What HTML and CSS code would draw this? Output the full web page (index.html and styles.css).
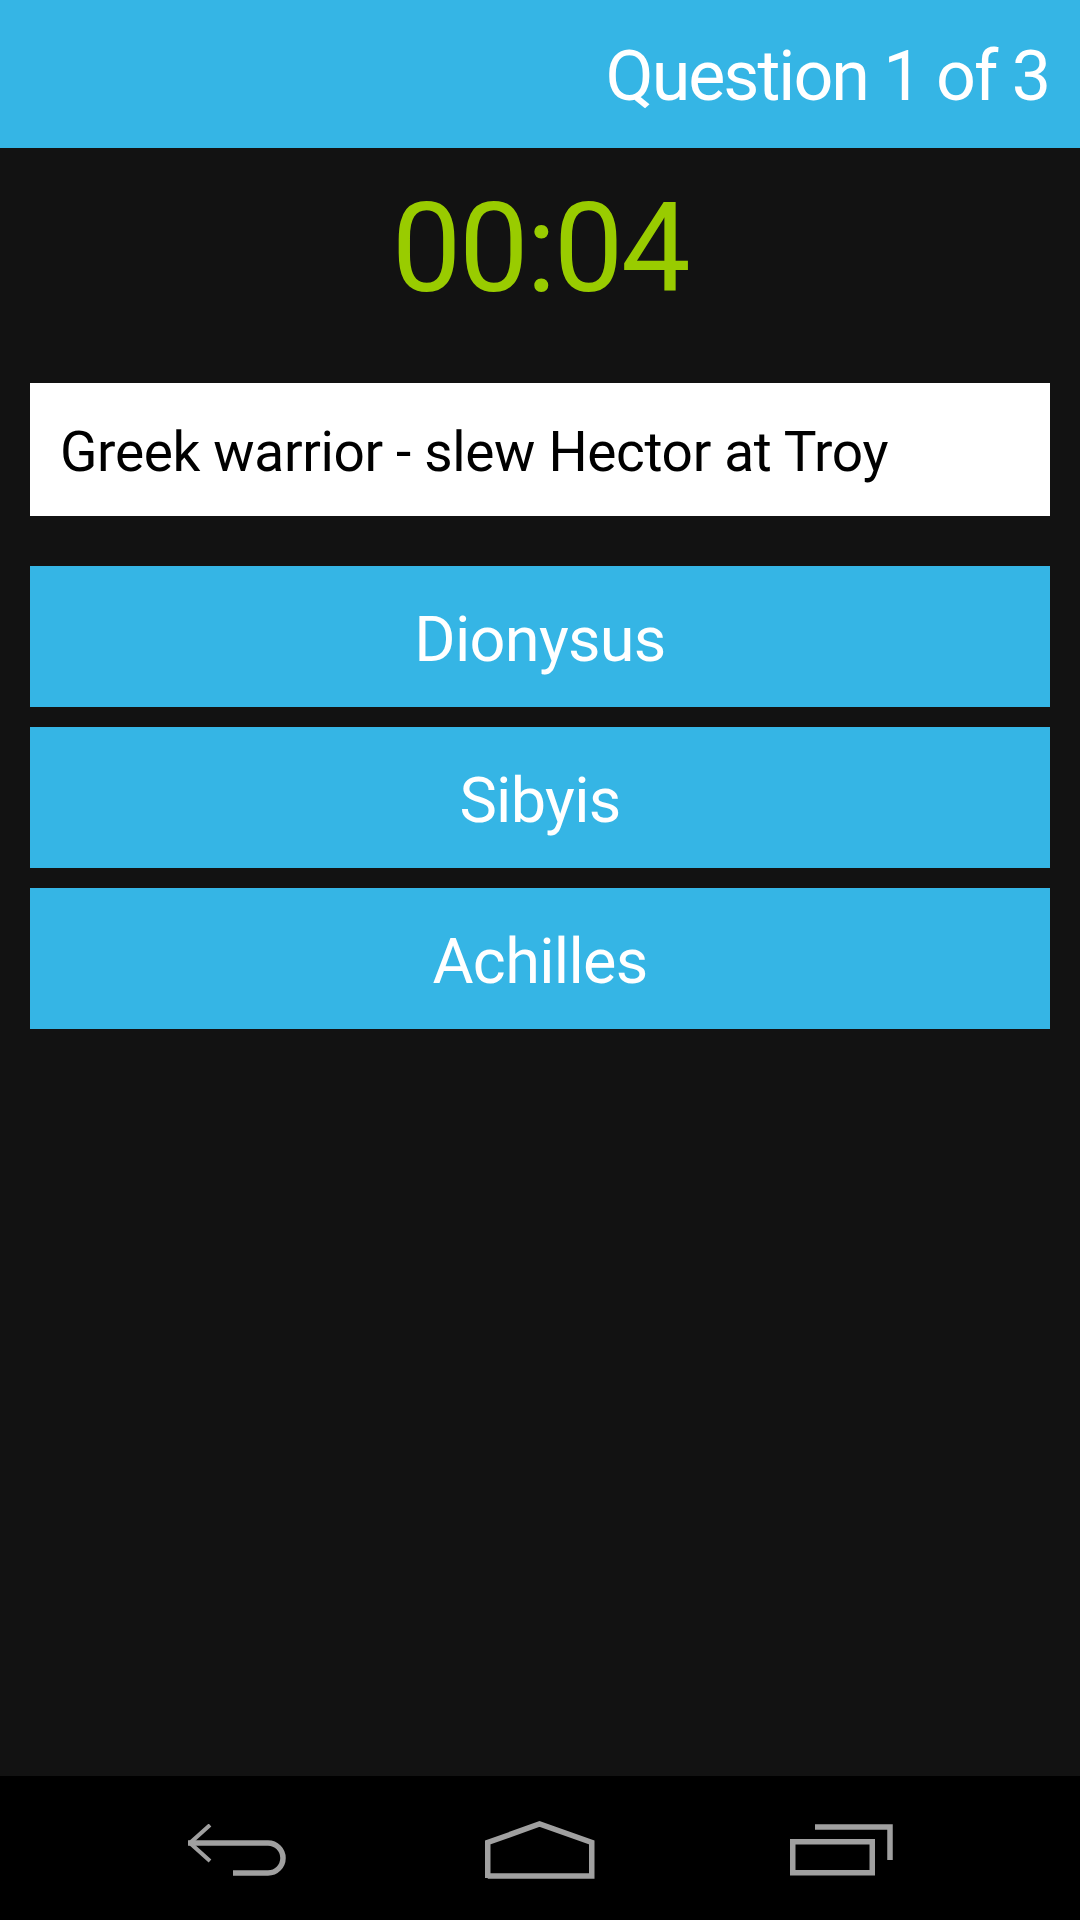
FILE: index.html
```html
<!DOCTYPE html>
<html lang="en">
<head>
  <meta charset="UTF-8">
  <title>Quiz</title>
  <link rel="stylesheet" href="styles.css">
</head>
<body>
  <div class="screen">
    <!-- Action bar -->
    <header class="action-bar">
      <span class="counter">Question 1 of 3</span>
    </header>

    <main class="quiz">
      <div class="timer">00:04</div>

      <div class="question">Greek warrior - slew Hector at Troy</div>

      <div class="answers">
        <button class="answer">Dionysus</button>
        <button class="answer">Sibyis</button>
        <button class="answer">Achilles</button>
      </div>
    </main>

    <!-- System navigation bar -->
    <nav class="nav-bar">
      <div class="nav-cell">
        <svg class="nav-icon" width="100" height="52" viewBox="0 0 100 52">
          <path d="M22 1 L2 19 L22 37" fill="none" stroke="#a0a0a0" stroke-width="4"/>
          <path d="M0 19 H80 A15 15 0 0 1 80 49 H45" fill="none" stroke="#a0a0a0" stroke-width="5.5"/>
        </svg>
      </div>
      <div class="nav-cell">
        <svg class="nav-icon" width="110" height="58" viewBox="0 0 110 58">
          <path d="M2.75 57 V21.5 L54.5 3 L106.75 21.5 V55 H2.75" fill="none" stroke="#a0a0a0" stroke-width="5.5"/>
        </svg>
      </div>
      <div class="nav-cell">
        <svg class="nav-icon" width="104" height="52" viewBox="0 0 104 52">
          <rect x="2.75" y="17.75" width="79.5" height="31" fill="none" stroke="#a0a0a0" stroke-width="5.5"/>
          <path d="M25 3 H100 V36" fill="none" stroke="#a0a0a0" stroke-width="5.5"/>
        </svg>
      </div>
    </nav>
  </div>
</body>
</html>
```

FILE: styles.css
```css
/* Global */
body {
  margin: 0;
  padding: 0;
  background-color: #121212;
  font-family: Roboto, "Liberation Sans", sans-serif;
}

.screen {
  display: flex;
  flex-direction: column;
  width: 1080px;
  height: 1920px;
}

/* Action bar */
.action-bar {
  display: flex;
  align-items: center;
  justify-content: flex-end;
  height: 148px;
  box-sizing: border-box;
  padding: 4px 31px 0 0;
  background-color: #35b5e5;
}

.counter {
  color: #fff;
  font-size: 70px;
  letter-spacing: -2px;
}

/* Quiz area */
.quiz {
  flex: 1;
  display: flex;
  flex-direction: column;
  padding: 0 30px;
}

.timer {
  margin-top: 39px;
  text-align: center;
  color: #99cc00;
  font-size: 124px;
  line-height: 124px;
  letter-spacing: -2.5px;
}

.question {
  margin-top: 72px;
  padding: 36px 30px 31px;
  background-color: #fff;
  color: #000;
  font-size: 55px;
  line-height: 66px;
  letter-spacing: -0.35px;
}

.answers {
  display: flex;
  flex-direction: column;
  gap: 20px;
  margin-top: 50px;
}

.answer {
  display: flex;
  align-items: center;
  justify-content: center;
  height: 141px;
  padding: 6px 0 0;
  border: none;
  background-color: #35b5e5;
  color: #fff;
  font-family: Roboto, "Liberation Sans", sans-serif;
  font-size: 63px;
  letter-spacing: -0.7px;
}

/* Navigation bar */
.nav-bar {
  display: grid;
  grid-template-columns: repeat(3, 302px);
  justify-content: center;
  align-items: center;
  height: 144px;
  background-color: #000;
}

.nav-cell {
  display: flex;
  justify-content: center;
  padding-top: 4px;
}

.nav-icon {
  display: block;
}
```
